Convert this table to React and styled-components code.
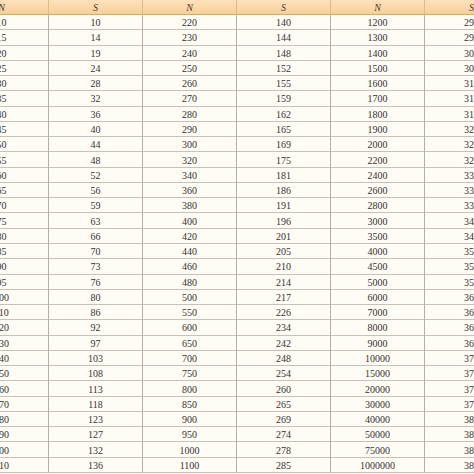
import styled, { createGlobalStyle } from "styled-components";

const GlobalStyle = createGlobalStyle`
  html, body {
    margin: 0;
    padding: 0;
    background: #fffcf6;
    overflow: hidden;
  }
`;

const Page = styled.div`
  width: 474px;
  height: 474px;
  overflow: hidden;
  background: #fffcf6;
`;

const Grid = styled.div`
  display: grid;
  grid-template-columns: repeat(6, 94px);
  grid-template-rows: 15px repeat(30, 15.27px);
  margin-left: -45px;
  width: 564px;
  font-family: "Liberation Serif", "Times New Roman", serif;
  font-size: 10px;
  color: #34322e;
`;

const HeadCell = styled.div`
  display: flex;
  align-items: center;
  justify-content: center;
  background: linear-gradient(#fde2bc, #f7cf9b);
  border-bottom: 1px solid #d9a868;
  border-right: 1px solid #e3b984;
  font-style: italic;
  color: #4a3b2a;
  box-sizing: border-box;
`;

const Cell = styled.div`
  display: flex;
  align-items: center;
  justify-content: center;
  border-bottom: 1px solid #c6c2ba;
  border-right: 1px solid #b3afa7;
  box-sizing: border-box;
  padding-top: 1px;
`;

const n1 = [10, 15, 20, 25, 30, 35, 40, 45, 50, 55, 60, 65, 70, 75, 80, 85, 90, 95, 100, 110, 120, 130, 140, 150, 160, 170, 180, 190, 200, 210];
const s1 = [10, 14, 19, 24, 28, 32, 36, 40, 44, 48, 52, 56, 59, 63, 66, 70, 73, 76, 80, 86, 92, 97, 103, 108, 113, 118, 123, 127, 132, 136];
const n2 = [220, 230, 240, 250, 260, 270, 280, 290, 300, 320, 340, 360, 380, 400, 420, 440, 460, 480, 500, 550, 600, 650, 700, 750, 800, 850, 900, 950, 1000, 1100];
const s2 = [140, 144, 148, 152, 155, 159, 162, 165, 169, 175, 181, 186, 191, 196, 201, 205, 210, 214, 217, 226, 234, 242, 248, 254, 260, 265, 269, 274, 278, 285];
const n3 = [1200, 1300, 1400, 1500, 1600, 1700, 1800, 1900, 2000, 2200, 2400, 2600, 2800, 3000, 3500, 4000, 4500, 5000, 6000, 7000, 8000, 9000, 10000, 15000, 20000, 30000, 40000, 50000, 75000, 1000000];
const s3 = [291, 297, 302, 306, 310, 313, 317, 320, 322, 327, 331, 335, 338, 341, 346, 351, 354, 357, 361, 364, 367, 368, 370, 375, 377, 379, 380, 381, 382, 384];

const rows = n1.map((n, i) => [n, s1[i], n2[i], s2[i], n3[i], s3[i]]);
const headers = ["N", "S", "N", "S", "N", "S"];

export default function App() {
  return (
    <Page>
      <GlobalStyle />
      <Grid>
        {headers.map((h, i) => (
          <HeadCell key={"h" + i}>{h}</HeadCell>
        ))}
        {rows.map((row, r) =>
          row.map((v, c) => <Cell key={r + "-" + c}>{v}</Cell>)
        )}
      </Grid>
    </Page>
  );
}
